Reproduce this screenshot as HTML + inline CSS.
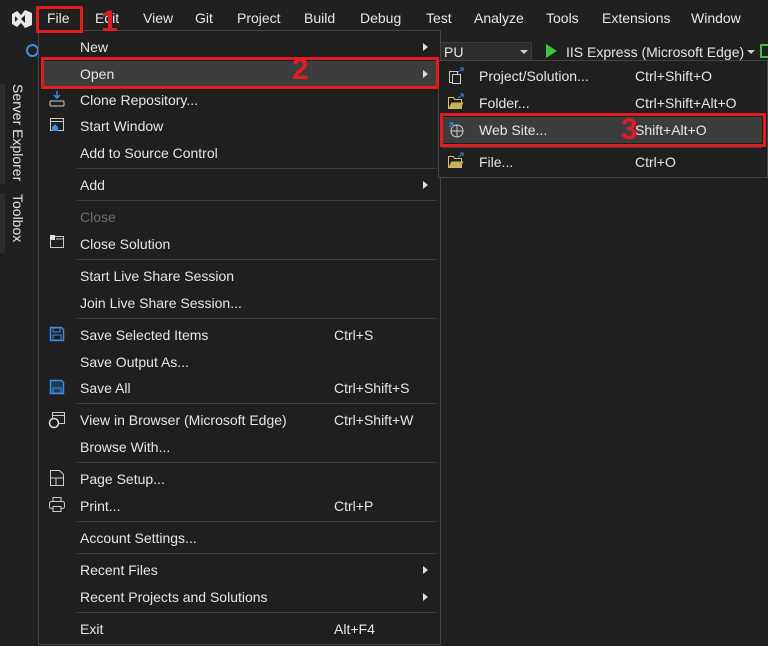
<!DOCTYPE html>
<html><head><meta charset="utf-8"><style>
*{margin:0;padding:0;box-sizing:border-box}
body{width:768px;height:646px;background:#202020;font-family:"Liberation Sans",sans-serif;color:#e6e6e6;position:relative;overflow:hidden;font-size:14px}
.a{position:absolute;white-space:nowrap}
.mb{top:10px;font-size:14px;color:#e8e8e8}
.menu{position:absolute;left:38px;top:30px;width:403px;height:615px;background:#1f1f1f;border:1px solid #454545}
.it{position:absolute;left:41px;font-size:14px;color:#e6e6e6;line-height:18px}
.sc{position:absolute;left:295px;font-size:14px;color:#e6e6e6;line-height:18px}
.ar{position:absolute;left:384px;width:0;height:0;border-left:5px solid #ddd;border-top:4px solid transparent;border-bottom:4px solid transparent}
.sep{position:absolute;left:38px;width:360px;height:1px;background:#3c3c3c}
.red{position:absolute;border:3px solid #e21a22}
.num{position:absolute;color:#e21a22;font-weight:bold;font-size:30px;line-height:30px}
</style></head><body>
<!-- menubar -->
<svg class="a" style="left:10px;top:8px" width="24" height="22" viewBox="0 0 24 22"><path d="M2 6l5-3 8 8-8 8-5-3zM15 2l7 3v12l-7 3-7-9z" fill="#e8e8e8"/><path d="M5 8v6l3-3zM15 7v8l-4-4z" fill="#202020"/></svg>
<span class="a mb" style="left:47px">File</span>
<span class="a mb" style="left:95px">Edit</span>
<span class="a mb" style="left:143px">View</span>
<span class="a mb" style="left:195px">Git</span>
<span class="a mb" style="left:237px">Project</span>
<span class="a mb" style="left:304px">Build</span>
<span class="a mb" style="left:360px">Debug</span>
<span class="a mb" style="left:426px">Test</span>
<span class="a mb" style="left:474px">Analyze</span>
<span class="a mb" style="left:546px">Tools</span>
<span class="a mb" style="left:602px">Extensions</span>
<span class="a mb" style="left:691px">Window</span>
<!-- toolbar -->
<div class="a" style="left:440px;top:42px;width:92px;height:20px;background:#2d2d2d;border:1px solid #3c3c3c"></div>
<span class="a" style="left:444px;top:44px;font-size:14px">PU</span>
<div class="a" style="left:520px;top:50px;border-top:4px solid #ccc;border-left:4px solid transparent;border-right:4px solid transparent"></div>
<div class="a" style="left:546px;top:44px;border-left:11px solid #3ec43e;border-top:7px solid transparent;border-bottom:7px solid transparent"></div>
<span class="a" style="left:566px;top:44px;font-size:14px">IIS Express (Microsoft Edge)</span>
<div class="a" style="left:747px;top:50px;border-top:4px solid #ccc;border-left:4px solid transparent;border-right:4px solid transparent"></div>
<div class="a" style="left:760px;top:44px;width:8px;height:14px;border:2px solid #3ec43e;border-right:none"></div>
<!-- left strip -->
<div class="a" style="left:26px;top:44px;width:13px;height:13px;border:2px solid #3d8ee0;border-radius:50%"></div>
<div class="a" style="left:0;top:84px;width:5px;height:100px;background:#2d2d2d"></div>
<div class="a" style="left:0;top:193px;width:5px;height:60px;background:#2d2d2d"></div>
<span class="a" style="left:26px;top:84px;transform-origin:0 0;transform:rotate(90deg);font-size:14px;line-height:16px">Server Explorer</span>
<span class="a" style="left:26px;top:194px;transform-origin:0 0;transform:rotate(90deg);font-size:14px;line-height:16px">Toolbox</span>
<!-- file menu -->
<div class="menu">
<div class="a" style="left:3px;top:30px;width:394px;height:26px;background:#3d3d3d"></div>
<span class="it" style="top:7px">New</span><div class="ar" style="top:12px"></div>
<span class="it" style="top:34px">Open</span><div class="ar" style="top:39px"></div>
<svg class="a" style="left:10px;top:59px" width="16" height="18"><path d="M8 1v7M5 5l3 3 3-3" stroke="#3d8ee0" fill="none" stroke-width="1.5"/><rect x="1" y="11" width="14" height="5" rx="1" stroke="#ccc" fill="none"/></svg>
<span class="it" style="top:60px">Clone Repository...</span>
<svg class="a" style="left:10px;top:86px" width="16" height="16"><rect x="1.5" y="1.5" width="13" height="12" stroke="#ccc" fill="none"/><path d="M1 4.5h14" stroke="#ccc"/><path d="M3 10l3-3 3 3v4H3z" fill="#3d8ee0"/></svg>
<span class="it" style="top:86px">Start Window</span>
<span class="it" style="top:113px">Add to Source Control</span>
<div class="sep" style="top:137px"></div>
<span class="it" style="top:145px">Add</span><div class="ar" style="top:150px"></div>
<div class="sep" style="top:169px"></div>
<span class="it" style="top:177px;color:#6d6d6d">Close</span>
<svg class="a" style="left:10px;top:203px" width="16" height="16"><rect x="1.5" y="2.5" width="13" height="11" stroke="#ccc" fill="none"/><rect x="1" y="1" width="5" height="5" fill="#ddd"/><path d="M7 5h7" stroke="#ccc"/></svg>
<span class="it" style="top:204px">Close Solution</span>
<div class="sep" style="top:228px"></div>
<span class="it" style="top:236px">Start Live Share Session</span>
<span class="it" style="top:263px">Join Live Share Session...</span>
<div class="sep" style="top:287px"></div>
<svg class="a" style="left:10px;top:295px" width="16" height="16"><path d="M1.5 1.5h11l2 2v11h-13z" stroke="#3d8ee0" fill="none" stroke-width="1.5"/><rect x="4" y="2" width="7" height="4" stroke="#3d8ee0" fill="none"/><rect x="4" y="9" width="8" height="5" stroke="#3d8ee0" fill="none"/></svg>
<span class="it" style="top:295px">Save Selected Items</span><span class="sc" style="top:295px">Ctrl+S</span>
<span class="it" style="top:322px">Save Output As...</span>
<svg class="a" style="left:10px;top:348px" width="16" height="16"><path d="M1.5 1.5h11l2 2v11h-13z" stroke="#3d8ee0" fill="#1f3a5a" stroke-width="1.5"/><rect x="4" y="9" width="8" height="5" stroke="#3d8ee0" fill="none"/></svg>
<span class="it" style="top:348px">Save All</span><span class="sc" style="top:348px">Ctrl+Shift+S</span>
<div class="sep" style="top:372px"></div>
<svg class="a" style="left:9px;top:380px" width="18" height="18"><rect x="4.5" y="1.5" width="12" height="11" stroke="#ccc" fill="none"/><path d="M4 4.5h13" stroke="#ccc"/><circle cx="6" cy="12" r="4.5" fill="#1f1f1f" stroke="#ddd" stroke-width="1.5"/></svg>
<span class="it" style="top:380px">View in Browser (Microsoft Edge)</span><span class="sc" style="top:380px">Ctrl+Shift+W</span>
<span class="it" style="top:407px">Browse With...</span>
<div class="sep" style="top:431px"></div>
<svg class="a" style="left:10px;top:438px" width="16" height="18"><path d="M1.5 1.5h9l4 4v11h-13zM1.5 9h13M7 9v7.5" stroke="#ccc" fill="none"/></svg>
<span class="it" style="top:439px">Page Setup...</span>
<svg class="a" style="left:9px;top:465px" width="18" height="18"><rect x="5" y="1.5" width="8" height="4" stroke="#ccc" fill="none"/><rect x="1.5" y="5.5" width="15" height="7" rx="2" stroke="#ccc" fill="none"/><rect x="5" y="10.5" width="8" height="5" stroke="#ccc" fill="#1f1f1f"/></svg>
<span class="it" style="top:466px">Print...</span><span class="sc" style="top:466px">Ctrl+P</span>
<div class="sep" style="top:490px"></div>
<span class="it" style="top:498px">Account Settings...</span>
<div class="sep" style="top:522px"></div>
<span class="it" style="top:530px">Recent Files</span><div class="ar" style="top:535px"></div>
<span class="it" style="top:557px">Recent Projects and Solutions</span><div class="ar" style="top:562px"></div>
<div class="sep" style="top:581px"></div>
<span class="it" style="top:589px">Exit</span><span class="sc" style="top:589px">Alt+F4</span>
</div>
<!-- submenu -->
<div class="a" style="left:438px;top:60px;width:330px;height:118px;background:#1f1f1f;border:1px solid #454545">
<div class="a" style="left:3px;top:56px;width:320px;height:26px;background:#3d3d3d"></div>
<svg class="a" style="left:8px;top:6px" width="18" height="18"><rect x="2.5" y="4.5" width="8" height="11" stroke="#ccc" fill="none"/><rect x="5.5" y="7.5" width="8" height="9" stroke="#ccc" fill="#1f1f1f"/><path d="M11 5l5-3M13 1h3v3" stroke="#3d8ee0" fill="none"/></svg>
<span class="a" style="left:40px;top:7px">Project/Solution...</span><span class="a" style="left:196px;top:7px">Ctrl+Shift+O</span>
<svg class="a" style="left:8px;top:32px" width="18" height="18"><path d="M1.5 4.5h5l1 2h7v9h-13z" stroke="#d8c06a" fill="none"/><path d="M1.5 15.5l3-6h12l-3 6z" fill="#c9b05a"/><path d="M11 5l5-3M13 1h3v3" stroke="#3d8ee0" fill="none"/></svg>
<span class="a" style="left:40px;top:34px">Folder...</span><span class="a" style="left:196px;top:34px">Ctrl+Shift+Alt+O</span>
<svg class="a" style="left:8px;top:60px" width="18" height="18"><circle cx="10" cy="10" r="6" stroke="#ccc" fill="none"/><path d="M4 10h12M10 4v12" stroke="#ccc"/><path d="M2 6l4-4M2 2h4v4" stroke="#3d8ee0" fill="none"/></svg>
<span class="a" style="left:40px;top:61px">Web Site...</span><span class="a" style="left:196px;top:61px">Shift+Alt+O</span>
<div class="a" style="left:3px;top:86px;width:320px;height:1px;background:#3c3c3c"></div>
<svg class="a" style="left:8px;top:91px" width="18" height="18"><path d="M1.5 4.5h5l1 2h7v9h-13z" stroke="#d8c06a" fill="none"/><path d="M1.5 15.5l3-6h12l-3 6z" fill="#c9b05a"/><path d="M11 5l5-3M13 1h3v3" stroke="#3d8ee0" fill="none"/></svg>
<span class="a" style="left:40px;top:93px">File...</span><span class="a" style="left:196px;top:93px">Ctrl+O</span>
</div>
<!-- annotations -->
<div class="red" style="left:36px;top:6px;width:47px;height:27px"></div>
<span class="num" style="left:101px;top:7px">1</span>
<div class="red" style="left:41px;top:57px;width:398px;height:32px"></div>
<span class="num" style="left:292px;top:55px">2</span>
<div class="red" style="left:440px;top:113px;width:326px;height:34px"></div>
<span class="num" style="left:621px;top:115px">3</span>
</body></html>
